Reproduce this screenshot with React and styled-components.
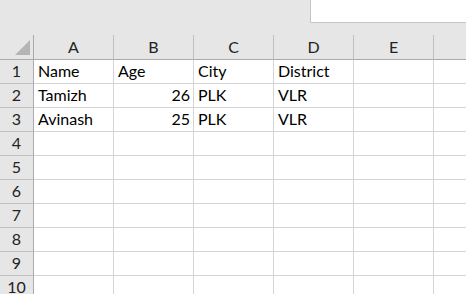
import React from "react";
import styled, { createGlobalStyle } from "styled-components";

const Global = createGlobalStyle`
  html, body { margin: 0; padding: 0; background: #e6e6e6; overflow: hidden; }
  body { font-family: Lato, "Open Sans", sans-serif; }
`;

const Page = styled.div`
  width: 466px;
  height: 294px;
  background: #e6e6e6;
  display: flex;
  flex-direction: column;
  overflow: hidden;
`;

const TopBar = styled.div`
  height: 35px;
  display: flex;
  justify-content: flex-end;
  align-items: flex-start;
  flex-shrink: 0;
`;

const NameBox = styled.div`
  width: 155px;
  height: 22px;
  background: #ffffff;
  border-left: 1px solid #c6c6c6;
  border-bottom: 1px solid #c6c6c6;
`;

const Sheet = styled.div`
  display: grid;
  grid-template-columns: 34px repeat(6, 80px);
  grid-auto-rows: 24px;
  grid-template-rows: 25px;
  background: #ffffff;
`;

const Corner = styled.div`
  position: relative;
  background: #e6e6e6;
  border-right: 1px solid #ababab;
  border-bottom: 1px solid #ababab;
  box-sizing: border-box;
`;

const Triangle = styled.svg`
  position: absolute;
  right: 3px;
  bottom: 4px;
`;

const ColHeader = styled.div`
  background: #e6e6e6;
  border-right: 1px solid #c0c0c0;
  border-bottom: 1px solid #ababab;
  box-sizing: border-box;
  display: flex;
  align-items: center;
  justify-content: center;
  font-size: 16px;
  color: #222;
  padding-bottom: 1px;
`;

const RowHeader = styled.div`
  background: #e6e6e6;
  border-right: 1px solid #ababab;
  border-bottom: 1px solid #c0c0c0;
  box-sizing: border-box;
  display: flex;
  align-items: flex-end;
  justify-content: center;
  font-size: 16px;
  color: #222;
  line-height: 18px;
  padding-bottom: 3px;
`;

const Cell = styled.div`
  border-right: 1px solid #d4d4d4;
  border-bottom: 1px solid #d4d4d4;
  box-sizing: border-box;
  display: flex;
  align-items: flex-end;
  justify-content: ${(p) => (p.$num ? "flex-end" : "flex-start")};
  padding: 0 3px 3px 4px;
  font-size: 16px;
  line-height: 18px;
  color: #000;
  white-space: nowrap;
  overflow: hidden;
`;

const cols = ["A", "B", "C", "D", "E", ""];
const data = [
  ["Name", "Age", "City", "District"],
  ["Tamizh", 26, "PLK", "VLR"],
  ["Avinash", 25, "PLK", "VLR"],
];

export default function App() {
  const rows = Array.from({ length: 10 }, (_, i) => data[i] || []);
  return (
    <Page>
      <Global />
      <TopBar>
        <NameBox />
      </TopBar>
      <Sheet>
        <Corner>
          <Triangle width="15" height="15" viewBox="0 0 15 15">
            <polygon points="15,0 15,15 0,15" fill="#b4b4b4" />
          </Triangle>
        </Corner>
        {cols.map((c, i) => (
          <ColHeader key={i}>{c}</ColHeader>
        ))}
        {rows.map((r, ri) => (
          <React.Fragment key={ri}>
            <RowHeader>{ri + 1}</RowHeader>
            {cols.map((_, ci) => {
              const v = r[ci];
              return (
                <Cell key={ci} $num={typeof v === "number"}>
                  {v}
                </Cell>
              );
            })}
          </React.Fragment>
        ))}
      </Sheet>
    </Page>
  );
}
